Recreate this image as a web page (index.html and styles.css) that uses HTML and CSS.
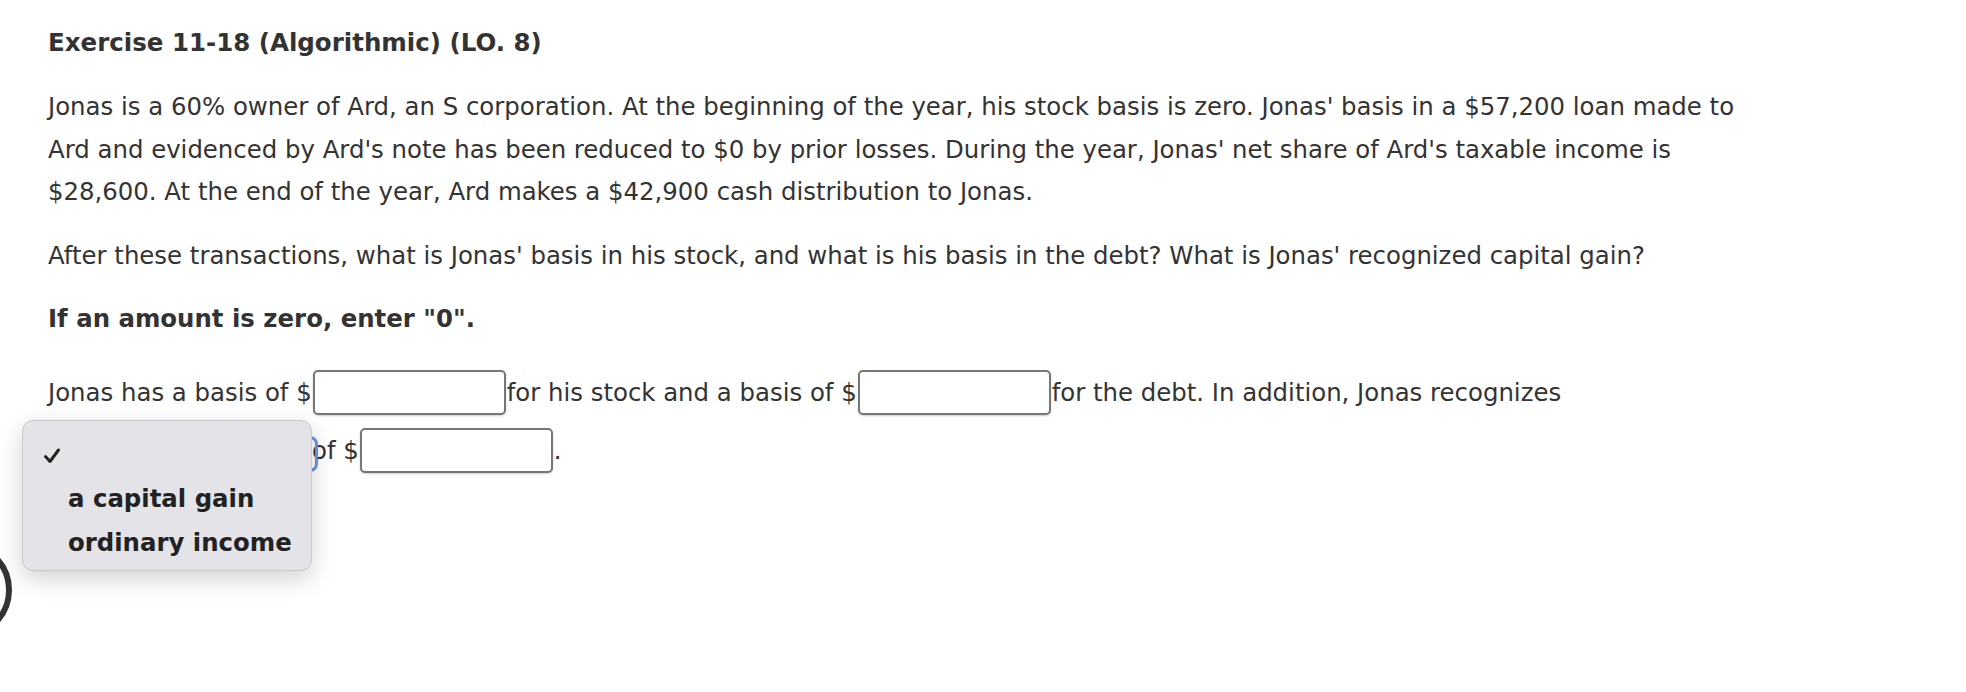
FILE: index.html
```html
<!DOCTYPE html>
<html>
<head>
<meta charset="utf-8">
<link rel="stylesheet" href="styles.css">
</head>
<body>
<div class="page">
  <h1 class="title">Exercise 11-18 (Algorithmic) (LO. 8)</h1>
  <p class="para">Jonas is a 60% owner of Ard, an S corporation. At the beginning of the year, his stock basis is zero. Jonas' basis in a $57,200 loan made to<br>Ard and evidenced by Ard's note has been reduced to $0 by prior losses. During the year, Jonas' net share of Ard's taxable income is<br>$28,600. At the end of the year, Ard makes a $42,900 cash distribution to Jonas.</p>
  <p class="para">After these transactions, what is Jonas' basis in his stock, and what is his basis in the debt? What is Jonas' recognized capital gain?</p>
  <p class="para bold">If an amount is zero, enter "0".</p>
  <div class="answer">
    <div class="line">Jonas has a basis of $<span class="input"></span>for his stock and a basis of $<span class="input"></span>for the debt. In addition, Jonas recognizes</div>
    <div class="line line2"><span class="select"><span class="ring"></span></span>of $<span class="input"></span>.</div>
    <div class="menu">
      <div class="item check"><svg class="tick" width="18" height="18" viewBox="0 0 18 18"><path d="M2.5 9.5 L7 14.5 L15.5 3" fill="none" stroke="#222" stroke-width="3" stroke-linecap="round" stroke-linejoin="round"/></svg></div>
      <div class="item">a capital gain</div>
      <div class="item">ordinary income</div>
    </div>
  </div>
</div>
<div class="circle"></div>
</body>
</html>
```
FILE: styles.css
```css
html, body {
  margin: 0;
  padding: 0;
  background: #ffffff;
  overflow: hidden;
}
body {
  width: 1966px;
  height: 692px;
  position: relative;
  font-family: "DejaVu Sans", Verdana, sans-serif;
  color: #333333;
}
.page {
  padding: 25px 0 0 48px;
}
.title {
  font-size: 24.5px;
  font-weight: bold;
  margin: 0 0 25px 0;
  line-height: 36px;
}
.para {
  font-size: 24.4px;
  line-height: 42.6px;
  margin: 0 0 21px 0;
  white-space: nowrap;
}
.bold {
  font-weight: bold;
}
.answer {
  position: relative;
  font-size: 24.4px;
  padding-top: 8px;
}
.line {
  display: flex;
  align-items: center;
  height: 46px;
  white-space: nowrap;
}
.line2 {
  margin-top: 12px;
}
.input {
  display: inline-block;
  width: 189px;
  height: 41px;
  border: 2px solid #767676;
  border-radius: 5px;
  background: #fff;
  box-shadow: 0 1px 2px rgba(0,0,0,0.2);
  margin: 0 1px;
}
.select {
  display: inline-block;
  width: 264px;
  height: 36px;
  position: relative;
}
.ring {
  position: absolute;
  right: -6px;
  top: 3px;
  width: 12px;
  height: 30px;
  border: 3px solid #6a94e6;
  border-radius: 8px;
}
.menu {
  position: absolute;
  left: -26px;
  top: 58px;
  width: 290px;
  height: 151px;
  box-sizing: border-box;
  background: #e4e3e8;
  border: 1px solid #c9c8cc;
  border-radius: 11px;
  box-shadow: 0 8px 24px rgba(0,0,0,0.18);
  padding-top: 14px;
}
.item {
  font-weight: bold;
  color: #222;
  font-size: 24.4px;
  line-height: 44px;
  padding-left: 45px;
  height: 44px;
}
.check {
  padding-left: 20px;
  height: 42px;
  display: flex;
  align-items: center;
}
.tick {
  display: block;
}
.circle {
  position: absolute;
  left: -86px;
  top: 541px;
  width: 86px;
  height: 86px;
  border: 6px solid #333;
  border-radius: 50%;
}
```
